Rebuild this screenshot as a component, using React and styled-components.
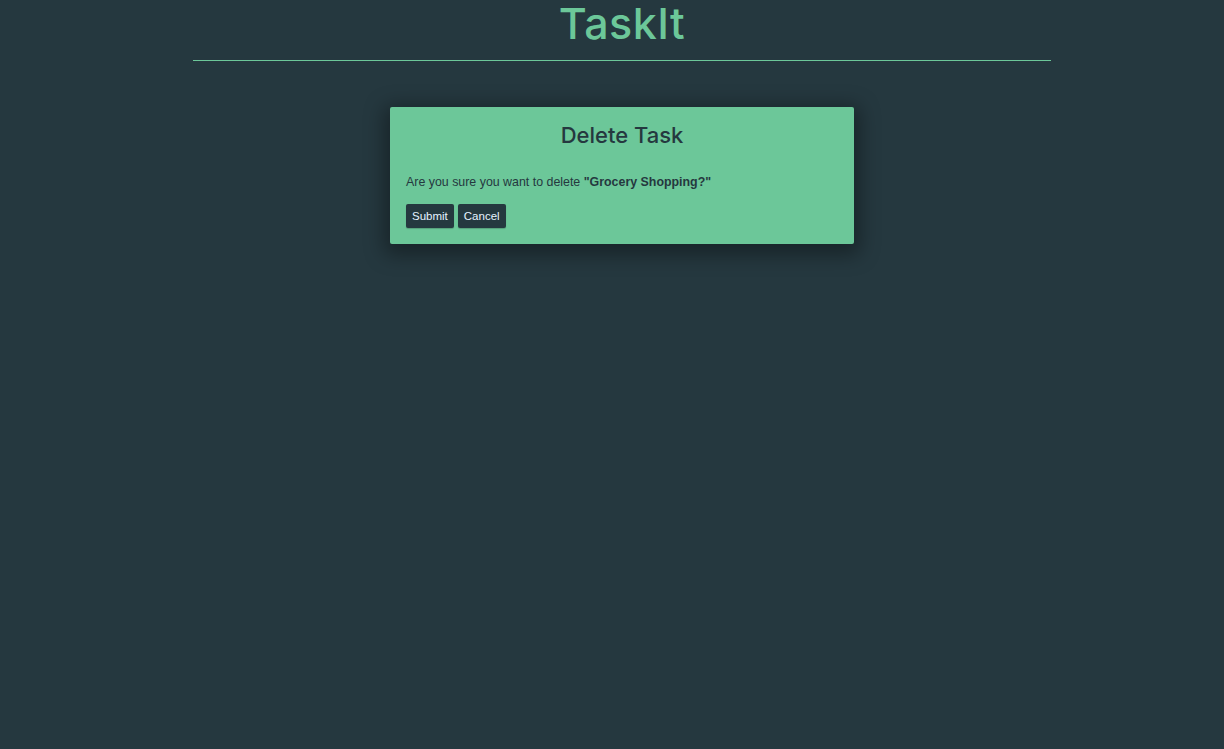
import styled, { createGlobalStyle } from "styled-components";

const GlobalStyle = createGlobalStyle`
	body {
		margin: 0;
		background-color: #25383f;
		font-family: "Liberation Sans", Arial, sans-serif;
	}
`;

function App() {
	return (
		<Page>
			<GlobalStyle />
			<Header>
				<Title>TaskIt</Title>
				<Divider />
			</Header>
			<Modal>
				<ModalTitle>Delete Task</ModalTitle>
				<Question>
					Are you sure you want to delete <b>"Grocery Shopping?"</b>
				</Question>
				<Actions>
					<Button>Submit</Button>
					<Button>Cancel</Button>
				</Actions>
			</Modal>
		</Page>
	);
}

export default App;

const Page = styled.div`
	min-height: 749px;
	box-sizing: border-box;
	padding-left: 20px;
	display: flex;
	flex-direction: column;
	align-items: center;
`;

const Header = styled.header`
	width: 858px;
	display: flex;
	flex-direction: column;
	align-items: center;
`;

const Title = styled.h1`
	margin: 0;
	font-family: Inter, "Noto Sans", sans-serif;
	font-weight: 500;
	font-size: 43px;
	line-height: 46px;
	letter-spacing: 0.5px;
	color: #6cc799;
	padding-bottom: 14px;
`;

const Divider = styled.hr`
	width: 100%;
	margin: 0;
	border: none;
	border-top: 1px solid #6cc799;
`;

const Modal = styled.div`
	margin-top: 46px;
	width: 464px;
	box-sizing: border-box;
	padding: 13px 16px 16px;
	background-color: #6cc799;
	border-radius: 2px;
	box-shadow: 0 5px 20px 6px rgba(0, 0, 0, 0.35);
	color: #25383f;
`;

const ModalTitle = styled.h2`
	margin: 0;
	text-align: center;
	font-family: Inter, "Noto Sans", sans-serif;
	font-weight: 500;
	font-size: 22px;
	line-height: 30px;
`;

const Question = styled.p`
	margin: 25px 0 14px;
	font-size: 12.4px;
	line-height: 15px;
`;

const Actions = styled.div`
	display: flex;
	gap: 4px;
`;

const Button = styled.button`
	height: 24px;
	padding: 0 6px;
	border: none;
	border-radius: 2px;
	background-color: #25383f;
	color: #e6f3ff;
	font-family: "Liberation Sans", Arial, sans-serif;
	font-size: 11.5px;
	box-shadow: 0 1px 1px rgba(0, 0, 0, 0.2);
`;
